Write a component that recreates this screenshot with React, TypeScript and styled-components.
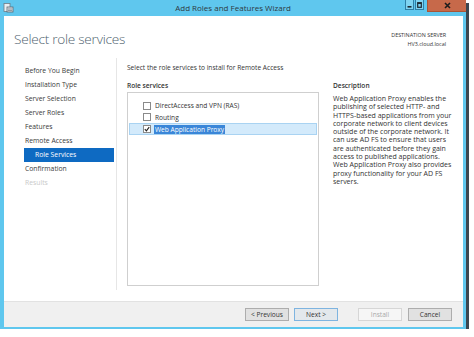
import React from "react";
import styled, { createGlobalStyle } from "styled-components";

const Global = createGlobalStyle`
  html, body { margin: 0; padding: 0; background: #ffffff; }
  body { font-family: "Open Sans", "Noto Sans", sans-serif; }
  * { box-sizing: border-box; }
`;

const Frame = styled.div`
  width: 466px;
  height: 329px;
  background: #5fc7ee;
  box-shadow: 3px 3px 0 #3b4650;
  display: flex;
  flex-direction: column;
  padding: 0 3px 2px 4px;
`;

const TitleBar = styled.div`
  height: 16px;
  flex-shrink: 0;
  display: grid;
  grid-template-columns: 1fr auto 1fr;
  align-items: start;
  margin-left: -4px;
  margin-right: -3px;
`;

const AppIcon = styled.div`
  width: 16px;
  height: 16px;
  display: flex;
  align-items: center;
  justify-content: center;
`;

const TitleText = styled.div`
  text-align: center;
  font-size: 8px;
  line-height: 16px;
  color: #2e3a42;
`;

const Controls = styled.div`
  justify-self: end;
  display: flex;
  align-items: flex-start;
`;

const SysButton = styled.div`
  flex-shrink: 0;
  width: 9px;
  height: 10px;
  margin-right: 1px;
  background: #7fd4f2;
  border: 1px solid #2f7fa6;
  border-top: none;
  display: flex;
  align-items: center;
  justify-content: center;
`;

const CloseButton = styled.div`
  flex-shrink: 0;
  width: 39px;
  height: 12px;
  margin-left: 2px;
  background-color: #c7694a;
  border-left: 1px solid #a95536;
  border-bottom: 1px solid #a95536;
  display: flex;
  align-items: center;
  justify-content: center;
`;

const Client = styled.div`
  flex: 1;
  background: #ffffff;
  display: flex;
  flex-direction: column;
`;

const Header = styled.div`
  height: 42px;
  display: flex;
  justify-content: space-between;
  align-items: flex-start;
  padding: 0 17px 0 10px;
`;

const Heading = styled.h1`
  margin: 14px 0 0 0;
  font-family: "Open Sans", sans-serif;
  font-weight: 300;
  font-size: 13.6px;
  letter-spacing: -0.25px;
  color: #4f5f6e;
  line-height: 18px;
`;

const Dest = styled.div`
  margin-top: 15px;
  text-align: right;
  font-size: 5.4px;
  line-height: 9px;
  color: #333;
`;

const Body = styled.div`
  flex: 1;
  display: flex;
`;

const Nav = styled.nav`
  width: 113px;
  padding: 6px 2px 0 20px;
  border-right: 1px solid #e6e6e6;
  margin-bottom: 11px;
  display: flex;
  flex-direction: column;
`;

const NavItem = styled.div<{ $active?: boolean; $disabled?: boolean; $sub?: boolean }>`
  height: 14px;
  line-height: 14px;
  font-size: 6.8px;
  padding-left: ${(p) => (p.$sub ? "11px" : "1px")};
  color: ${(p) => (p.$active ? "#ffffff" : p.$disabled ? "#c9c9c9" : "#3a3a3a")};
  background: ${(p) => (p.$active ? "#0e6ac2" : "transparent")};
`;

const Content = styled.section`
  flex: 1;
  padding: 5px 10px 0 10px;
  display: flex;
  flex-direction: column;
`;

const Intro = styled.div`
  font-size: 6.6px;
  line-height: 9px;
  color: #333;
  height: 18px;
`;

const Columns = styled.div`
  display: grid;
  grid-template-columns: 192px 1fr;
  column-gap: 14px;
`;

const Label = styled.div`
  font-size: 6.6px;
  font-weight: 600;
  line-height: 9px;
  color: #333;
  height: 9px;
`;

const ListBox = styled.div`
  margin-top: 2px;
  height: 194px;
  border: 1px solid #cfcfcf;
  padding: 7px 1px 0 1px;
  display: flex;
  flex-direction: column;
`;

const ListRow = styled.div<{ $selected?: boolean }>`
  height: ${(p) => (p.$selected ? "12px" : "11.5px")};
  display: flex;
  align-items: center;
  gap: 3px;
  padding-left: 13px;
  background: ${(p) => (p.$selected ? "#d3eafb" : "transparent")};
  border: 1px solid ${(p) => (p.$selected ? "#a9d3f2" : "transparent")};
`;

const Check = styled.div`
  width: 8px;
  height: 8px;
  border: 1px solid #8a8a8a;
  background: #fff;
  display: flex;
  align-items: center;
  justify-content: center;
`;

const RowText = styled.span<{ $selected?: boolean }>`
  font-size: 6.6px;
  line-height: 9px;
  padding: 0 1px;
  color: ${(p) => (p.$selected ? "#ffffff" : "#333333")};
  background: ${(p) => (p.$selected ? "#3a86d8" : "transparent")};
`;

const DescText = styled.div`
  margin-top: 5px;
  font-size: 7px;
  line-height: 8.3px;
  color: #333;
  white-space: pre-line;
`;

const Footer = styled.div`
  height: 26px;
  background: #f0f0f0;
  border-top: 1px solid #e2e2e2;
  display: flex;
  align-items: center;
  justify-content: flex-end;
  padding-right: 11px;
`;

const Btn = styled.div<{ $variant?: "default" | "disabled" | "normal"; $gap?: number }>`
  width: 44px;
  height: 13px;
  margin-left: ${(p) => p.$gap ?? 0}px;
  display: flex;
  align-items: center;
  justify-content: center;
  font-size: 6.6px;
  color: ${(p) => (p.$variant === "disabled" ? "#a8a8a8" : "#333")};
  background: ${(p) =>
    p.$variant === "disabled" ? "#f6f6f6" : p.$variant === "default" ? "#e3e8ec" : "#e1e1e1"};
  border: 1px solid
    ${(p) =>
      p.$variant === "disabled" ? "#d6d6d6" : p.$variant === "default" ? "#7eb4e0" : "#adadad"};
`;

const navItems: { label: string; active?: boolean; disabled?: boolean; sub?: boolean }[] = [
  { label: "Before You Begin" },
  { label: "Installation Type" },
  { label: "Server Selection" },
  { label: "Server Roles" },
  { label: "Features" },
  { label: "Remote Access" },
  { label: "Role Services", active: true, sub: true },
  { label: "Confirmation" },
  { label: "Results", disabled: true },
];

const roles = [
  { label: "DirectAccess and VPN (RAS)", checked: false },
  { label: "Routing", checked: false },
  { label: "Web Application Proxy", checked: true, selected: true },
];

const description = [
  "Web Application Proxy enables the",
  "publishing of selected HTTP- and",
  "HTTPS-based applications from your",
  "corporate network to client devices",
  "outside of the corporate network. It",
  "can use AD FS to ensure that users",
  "are authenticated before they gain",
  "access to published applications.",
  "Web Application Proxy also provides",
  "proxy functionality for your AD FS",
  "servers.",
].join("\n");

export default function App() {
  return (
    <>
      <Global />
      <Frame>
        <TitleBar>
          <AppIcon>
            <svg width="11" height="10" viewBox="0 0 11 10">
              <rect x="1" y="0.5" width="6" height="8" fill="#e8eef2" stroke="#6d7c86" strokeWidth="0.8" />
              <rect x="4" y="4" width="6" height="5" fill="#d8dee3" stroke="#5c6a74" strokeWidth="0.8" />
              <line x1="5" y1="6" x2="9" y2="6" stroke="#6d7c86" strokeWidth="0.7" />
              <line x1="5" y1="7.5" x2="9" y2="7.5" stroke="#6d7c86" strokeWidth="0.7" />
            </svg>
          </AppIcon>
          <TitleText>Add Roles and Features Wizard</TitleText>
          <Controls>
            <SysButton>
              <svg width="5" height="6" viewBox="0 0 5 6">
                <rect x="0.5" y="4" width="4" height="1.6" fill="#1d2a33" />
              </svg>
            </SysButton>
            <SysButton>
              <svg width="5" height="6" viewBox="0 0 5 6">
                <rect x="0.7" y="0.7" width="3.6" height="4.6" fill="none" stroke="#1d2a33" strokeWidth="1.2" />
                <rect x="0.5" y="0.5" width="4" height="1.5" fill="#1d2a33" />
              </svg>
            </SysButton>
            <CloseButton>
              <svg width="7" height="7" viewBox="0 0 7 7">
                <path d="M1 1 L6 6 M6 1 L1 6" stroke="#1c1c1c" strokeWidth="1.6" />
              </svg>
            </CloseButton>
          </Controls>
        </TitleBar>
        <Client>
          <Header>
            <Heading>Select role services</Heading>
            <Dest>
              DESTINATION SERVER
              <br />
              HV3.cloud.local
            </Dest>
          </Header>
          <Body>
            <Nav>
              {navItems.map((n) => (
                <NavItem key={n.label} $active={n.active} $disabled={n.disabled} $sub={n.sub}>
                  {n.label}
                </NavItem>
              ))}
            </Nav>
            <Content>
              <Intro>Select the role services to install for Remote Access</Intro>
              <Columns>
                <div>
                  <Label>Role services</Label>
                  <ListBox>
                    {roles.map((r) => (
                      <ListRow key={r.label} $selected={r.selected}>
                        <Check>
                          {r.checked && (
                            <svg width="6" height="6" viewBox="0 0 6 6">
                              <path d="M0.8 3.2 L2.4 4.8 L5.2 1.2" fill="none" stroke="#222" strokeWidth="1.1" />
                            </svg>
                          )}
                        </Check>
                        <RowText $selected={r.selected}>{r.label}</RowText>
                      </ListRow>
                    ))}
                  </ListBox>
                </div>
                <div>
                  <Label>Description</Label>
                  <DescText>{description}</DescText>
                </div>
              </Columns>
            </Content>
          </Body>
          <Footer>
            <Btn>&lt; Previous</Btn>
            <Btn $variant="default" $gap={5}>Next &gt;</Btn>
            <Btn $variant="disabled" $gap={20}>Install</Btn>
            <Btn $gap={6}>Cancel</Btn>
          </Footer>
        </Client>
      </Frame>
    </>
  );
}
